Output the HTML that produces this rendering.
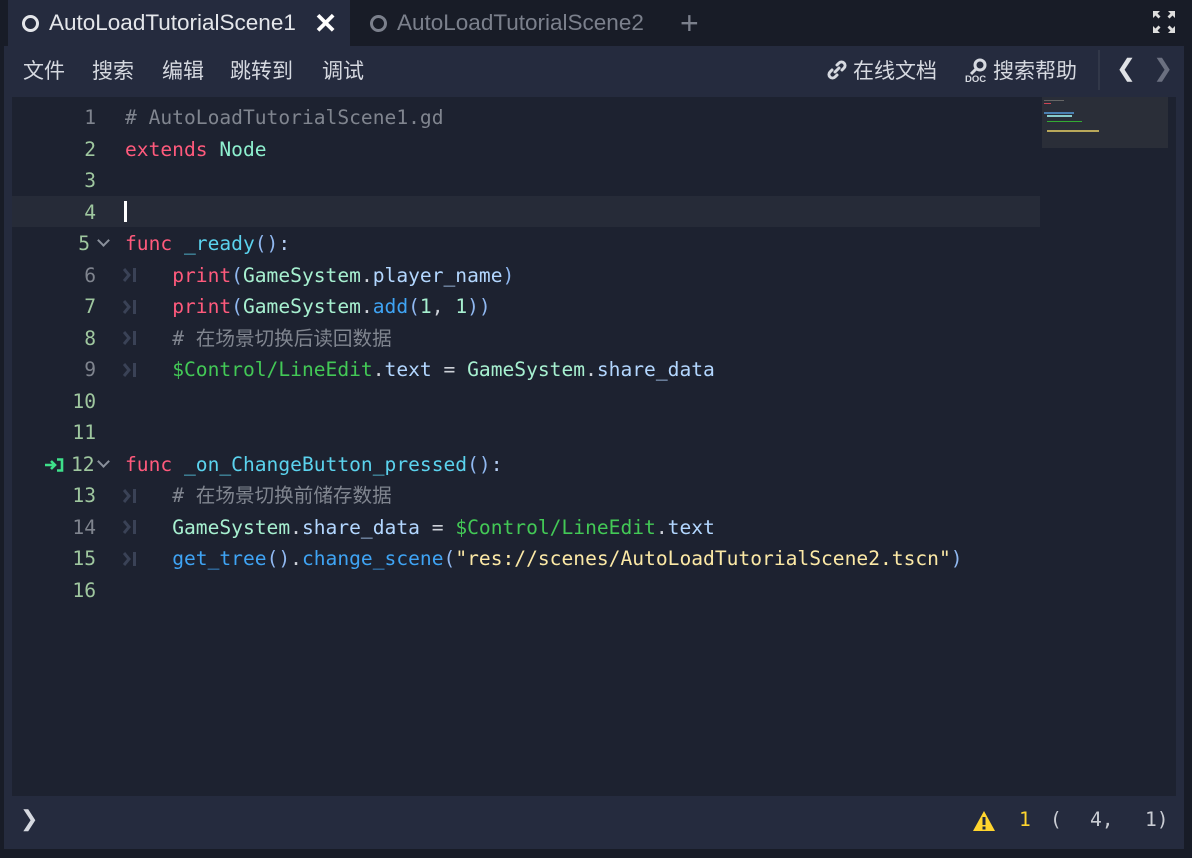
<!DOCTYPE html>
<html><head><meta charset="utf-8"><style>
*{margin:0;padding:0;box-sizing:border-box}
body{width:1192px;height:858px;background:#181c27;overflow:hidden;position:relative;font-family:"Liberation Sans","Noto Sans CJK SC",sans-serif;color:#cdd1d8}
.tab{position:absolute;top:0;height:46px;display:flex;align-items:center;font-size:22.5px}
.ring{width:17px;height:17px;border:3px solid currentColor;border-radius:50%;display:inline-block;margin-right:10px}
#panel{position:absolute;left:4px;top:46px;width:1180px;height:803px;background:#252b3e}
.menu{position:absolute;top:55px;font-size:21px;color:#d6d9e0}
#editor{position:absolute;left:12px;top:97px;width:1164px;height:699px;background:#1d2230}
.ln{position:absolute;left:40px;width:56px;text-align:right;font-family:"DejaVu Sans Mono",monospace;font-size:19.6px;color:#9fc79f;line-height:31.5px}
.g{color:#7f848e}
.code{position:absolute;left:125px;font-family:"DejaVu Sans Mono","Noto Sans CJK SC",monospace;font-size:19.6px;line-height:31.5px;white-space:pre;color:#cdd1d8}
.k{color:#ff5a7c}.t{color:#8ef0cf}.f{color:#5bd3ee}.p{color:#90b8f0}.c{color:#80858f}.m{color:#b3d7ff}.b{color:#3fa4f4}.s{color:#fce9a6}.n{color:#a7f0d0}.gr{color:#43c956}.sym{color:#b7d0f5}
.tabm{position:absolute;left:123px;width:14px;height:14px}
.fold{position:absolute;left:99px;width:9px;height:9px;border-right:2px solid #8a909b;border-bottom:2px solid #8a909b;transform:rotate(45deg)}
.st{position:absolute;top:808px;font-family:'DejaVu Sans Mono',monospace;font-size:19.6px;color:#c9ccd3}
</style></head><body>
<div class="tab" style="left:8px;width:342px;background:#252b3e;padding-left:14px;color:#e4e6ea"><span class="ring"></span>AutoLoadTutorialScene1<span style="margin-left:18px;font-size:28px;color:#fff;font-weight:bold">✕</span></div>
<div class="tab" style="left:370px;color:#7b808c"><span class="ring"></span>AutoLoadTutorialScene2</div>
<div class="tab" style="left:680px;color:#7b808c;font-size:32px;font-weight:300">+</div>
<svg style="position:absolute;left:1152px;top:10px" width="24" height="24" viewBox="0 0 24 24" fill="#ddd"><path d="M1 1h7l-2.5 2.5 3 3-2 2-3-3L1 8z M23 1v7l-2.5-2.5-3 3-2-2 3-3L16 1z M1 23v-7l2.5 2.5 3-3 2 2-3 3L8 23z M23 23h-7l2.5-2.5-3-3 2-2 3 3L23 16z"/></svg>
<div id="panel"></div>
<div class="menu" style="left:23px">文件</div>
<div class="menu" style="left:92px">搜索</div>
<div class="menu" style="left:162px">编辑</div>
<div class="menu" style="left:230px">跳转到</div>
<div class="menu" style="left:322px">调试</div>
<svg style="position:absolute;left:826px;top:59px" width="22" height="22" viewBox="0 0 22 22" fill="none" stroke="#d6d9e0" stroke-width="3" stroke-linecap="round"><path d="M9 13l4-4"/><path d="M11 6l2-2a3.5 3.5 0 0 1 5 5l-2 2"/><path d="M11 16l-2 2a3.5 3.5 0 0 1-5-5l2-2"/></svg>
<div class="menu" style="left:853px">在线文档</div>
<svg style="position:absolute;left:965px;top:57px" width="26" height="26" viewBox="0 0 26 26"><circle cx="15" cy="8" r="5" fill="none" stroke="#d6d9e0" stroke-width="3"/><path d="M11 12l-5 5" stroke="#d6d9e0" stroke-width="3"/><text x="0" y="25" font-family="Liberation Sans" font-weight="bold" font-size="9.5" fill="#d6d9e0">DOC</text></svg>
<div class="menu" style="left:993px">搜索帮助</div>
<div style="position:absolute;left:1098px;top:50px;width:2px;height:40px;background:#323849"></div>
<div class="menu" style="left:1116px;font-size:24px;top:54px;color:#e0e2e6">❮</div>
<div class="menu" style="left:1153px;font-size:24px;top:54px;color:#6b7080">❯</div>
<div id="editor"></div>
<div style="position:absolute;left:12px;top:196px;width:1028px;height:31px;background:#262b38"></div>
<div style="position:absolute;left:124px;top:201px;width:3px;height:21px;background:#fff"></div>
<div style="position:absolute;left:1042px;top:97px;width:126px;height:51px;background:#2a2e38"></div>
<div style="position:absolute;left:1044px;top:100px;width:20px;height:1px;background:#666"></div>
<div style="position:absolute;left:1044px;top:103px;width:7px;height:1px;background:#c45"></div>
<div style="position:absolute;left:1044px;top:112px;width:30px;height:2px;background:#4a7fb0"></div>
<div style="position:absolute;left:1047px;top:115px;width:25px;height:2px;background:#8cc"></div>
<div style="position:absolute;left:1047px;top:121px;width:35px;height:1px;background:#3a3"></div>
<div style="position:absolute;left:1047px;top:130px;width:52px;height:2px;background:#b9a85a"></div>

<div style="position:absolute;top:102px;left:0">
<div class="ln g" style="top:0">1</div>
<div class="ln" style="top:31.5px">2</div>
<div class="ln" style="top:63px">3</div>
<div class="ln" style="top:94.5px">4</div>
<div class="ln" style="top:126px;width:50px">5</div>
<div class="ln g" style="top:157.5px">6</div>
<div class="ln" style="top:189px">7</div>
<div class="ln" style="top:220.5px">8</div>
<div class="ln g" style="top:252px">9</div>
<div class="ln" style="top:283.5px">10</div>
<div class="ln" style="top:315px">11</div>
<div class="ln" style="top:346.5px;width:56px;text-align:left;left:71px">12</div>
<div class="ln" style="top:378px">13</div>
<div class="ln g" style="top:409.5px">14</div>
<div class="ln" style="top:441px">15</div>
<div class="ln" style="top:472.5px">16</div>
<div class="fold" style="top:134px"></div>
<div class="fold" style="top:355px"></div>
<svg style="position:absolute;left:44px;top:356px" width="20" height="14" viewBox="0 0 20 14" fill="none" stroke="#3ee08a" stroke-width="2.6"><path d="M1 7h10M7 3l4 4-4 4M13 1.5h5v11h-5"/></svg>
</div>
<svg width="0" height="0" style="position:absolute"><defs><g id="tm"><path d="M1 1l5 6-5 6" fill="none" stroke="#3a4256" stroke-width="3"/><rect x="10" y="0" width="3" height="14" fill="#3a4256"/></g></defs></svg>
<svg class="tabm" style="top:268px" viewBox="0 0 14 14"><use href="#tm"/></svg>
<svg class="tabm" style="top:299.5px" viewBox="0 0 14 14"><use href="#tm"/></svg>
<svg class="tabm" style="top:331px" viewBox="0 0 14 14"><use href="#tm"/></svg>
<svg class="tabm" style="top:362.5px" viewBox="0 0 14 14"><use href="#tm"/></svg>
<svg class="tabm" style="top:488.5px" viewBox="0 0 14 14"><use href="#tm"/></svg>
<svg class="tabm" style="top:520px" viewBox="0 0 14 14"><use href="#tm"/></svg>
<svg class="tabm" style="top:551.5px" viewBox="0 0 14 14"><use href="#tm"/></svg>
<div class="code" style="top:102px"><span class="c"># AutoLoadTutorialScene1.gd</span>
<span class="k">extends</span> <span class="t">Node</span>


<span class="k">func</span> <span class="f">_ready</span><span class="p">()</span><span class="sym">:</span>
    <span class="k">print</span><span class="p">(</span><span class="n">GameSystem</span>.<span class="m">player_name</span><span class="p">)</span>
    <span class="k">print</span><span class="p">(</span><span class="n">GameSystem</span>.<span class="b">add</span><span class="p">(</span><span class="n">1</span>, <span class="n">1</span><span class="p">))</span>
    <span class="c"># 在场景切换后读回数据</span>
    <span class="gr">$Control/LineEdit</span>.<span class="m">text</span> = <span class="n">GameSystem</span>.<span class="m">share_data</span>


<span class="k">func</span> <span class="f">_on_ChangeButton_pressed</span><span class="p">()</span><span class="sym">:</span>
    <span class="c"># 在场景切换前储存数据</span>
    <span class="n">GameSystem</span>.<span class="m">share_data</span> = <span class="gr">$Control/LineEdit</span>.<span class="m">text</span>
    <span class="b">get_tree</span><span class="p">()</span>.<span class="b">change_scene</span><span class="p">(</span><span class="s">"res://scenes/AutoLoadTutorialScene2.tscn"</span><span class="p">)</span>
</div>
<div style="position:absolute;left:20px;top:806px;font-size:22px;color:#d6d9e0">❯</div>
<svg style="position:absolute;left:972px;top:810px" width="24" height="22" viewBox="0 0 24 22"><path d="M12 1L23 21H1z" fill="#ffd52e"/><rect x="10.5" y="7" width="3" height="8" fill="#252b3e"/><rect x="10.5" y="16.5" width="3" height="3" fill="#252b3e"/></svg>
<div class="st" style="left:1019px;color:#ffd52e">1</div>
<div class="st" style="left:1050px">(</div>
<div class="st" style="left:1090px">4,</div>
<div class="st" style="left:1145px">1)</div>
</body></html>
